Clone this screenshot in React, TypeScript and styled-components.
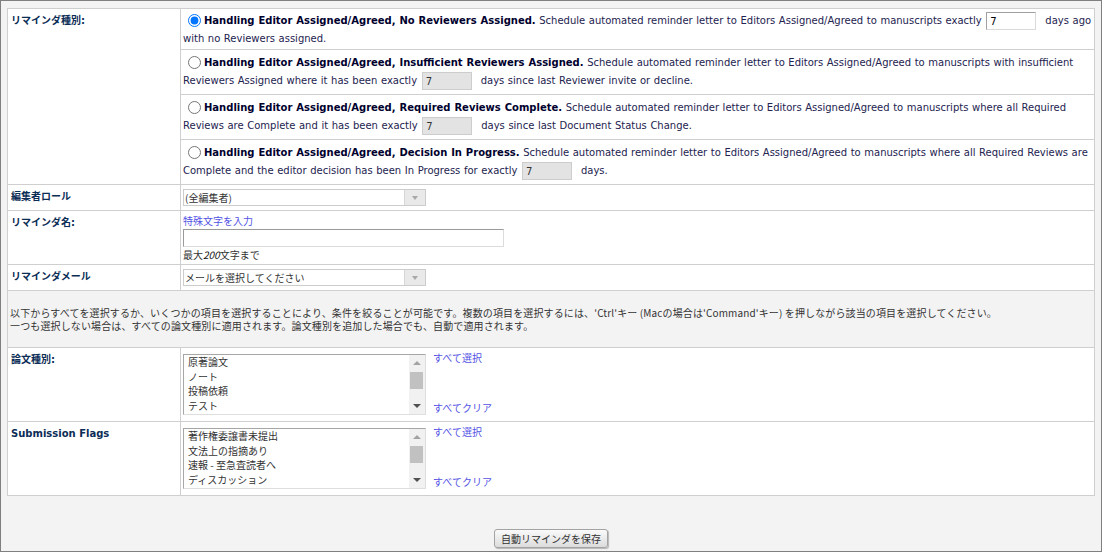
import React from "react";
import styled, { createGlobalStyle } from "styled-components";

const FONT = `"DejaVu Sans", "Noto Sans CJK JP", sans-serif`;
const JP = `"Noto Sans CJK JP", "DejaVu Sans", sans-serif`;
const LINE = "#cfcfcf";

const GlobalStyle = createGlobalStyle`
  html, body { margin: 0; padding: 0; background: #f3f3f3; }
  body { font-family: ${FONT}; font-size: 10px; }
  *, *::before, *::after { box-sizing: border-box; }
`;

const Page = styled.div`
  width: 1102px;
  height: 552px;
  border: 1px solid #7f7f7f;
  background: #f3f3f3;
  padding: 7px 6px 0 6px;
  display: flex;
  flex-direction: column;
`;

const Form = styled.div`
  display: grid;
  grid-template-columns: 173px 1fr;
  background: #fff;
  border: 1px solid ${LINE};
  border-bottom: none;
`;

const LabelCell = styled.div`
  border-right: 1px solid ${LINE};
  border-bottom: 1px solid ${LINE};
  padding: 5px 3px;
  font-weight: bold;
  line-height: 14px;
  color: #0b2d56;
`;

const ValueCell = styled.div<{ $pad?: string }>`
  border-bottom: 1px solid ${LINE};
  padding: ${(p) => p.$pad ?? "4px 2px"};
  min-width: 0;
`;

const OptionList = styled.div`
  display: flex;
  flex-direction: column;
`;

const Option = styled.div<{ $first?: boolean }>`
  padding: ${(p) => (p.$first ? "3px 2px 1px" : "4px 2px")};
  line-height: 18px;
  white-space: nowrap;
  word-spacing: 0.4px;
  color: #23234f;
  & + & {
    border-top: 1px solid ${LINE};
  }
`;

const Radio = styled.input`
  width: 13px;
  height: 13px;
  margin: 2px 3px 0 5px;
  vertical-align: top;
`;

const Title = styled.b`
  font-weight: bold;
  color: #00002e;
`;

const DayInput = styled.input`
  width: 50px;
  height: 18px;
  vertical-align: top;
  margin: 0 9px 0 1px;
  padding: 0 3px;
  font: 10px ${FONT};
  color: #000;
  border: 1px solid;
  border-color: #a0a0a0 #dadada #dadada #a0a0a0;
  background: #fff;
  &:disabled {
    background: #e3e3e3;
    border-color: #cdcdcd;
    color: #333;
  }
`;

const Select = styled.div`
  display: flex;
  width: 243px;
  height: 17px;
  border: 1px solid #cccccc;
  background: #fff;
  color: #333;
  font-family: ${JP};
`;

const SelectValue = styled.span`
  flex: 1;
  padding-left: 1px;
  line-height: 15px;
`;

const SelectArrow = styled.span`
  width: 21px;
  background: #e9e9e9;
  border-left: 1px solid #d6d6d6;
  display: flex;
  align-items: center;
  justify-content: center;
  &::after {
    content: "";
    border-left: 3px solid transparent;
    border-right: 3px solid transparent;
    border-top: 4px solid #a8a8a8;
  }
`;

const Link = styled.a`
  color: #5353e4;
  text-decoration: none;
  font-family: ${JP};
  cursor: pointer;
`;

const LinkLine = styled.div`
  line-height: 13px;
`;

const TextField = styled.input`
  display: block;
  width: 321px;
  height: 18px;
  margin: 1px 0;
  border: 1px solid;
  border-color: #9a9a9a #dcdcdc #dcdcdc #9a9a9a;
  background: #fff;
  font: 10px ${FONT};
`;

const Hint = styled.div`
  line-height: 14px;
  color: #333;
  font-family: ${JP};
  em {
    font-style: italic;
    color: #111;
  }
`;

const Note = styled.div`
  grid-column: 1 / -1;
  background: #f3f3f3;
  padding: 15px 2px;
  line-height: 13px;
  letter-spacing: 0.13px;
  font-family: ${JP};
  color: #333;
  border-bottom: 1px solid ${LINE};
`;

const ListRow = styled.div`
  display: flex;
  align-items: stretch;
`;

const ListBox = styled.div`
  margin-top: 3px;
  width: 243px;
  height: 61px;
  border: 1px solid;
  border-color: #a6a6a6 #dedede #dedede #a6a6a6;
  display: flex;
  background: #fff;
`;

const Items = styled.ul`
  flex: 1;
  margin: 0;
  padding: 0 0 0 4px;
  list-style: none;
  overflow: hidden;
  font-family: ${JP};
  line-height: 14.5px;
  color: #333;
`;

const Scrollbar = styled.div`
  width: 16px;
  background: #f1f1f1;
  display: flex;
  flex-direction: column;
`;

const ScrollBtn = styled.div<{ $dir: "up" | "down"; $color: string }>`
  height: 16px;
  display: flex;
  align-items: center;
  justify-content: center;
  &::after {
    content: "";
    border-left: 4px solid transparent;
    border-right: 4px solid transparent;
    ${(p) =>
      p.$dir === "up"
        ? `border-bottom: 4px solid ${p.$color};`
        : `border-top: 4px solid ${p.$color};`}
  }
`;

const Track = styled.div`
  flex: 1;
  padding: 1px 2px 0 1px;
`;

const Thumb = styled.div`
  height: 17px;
  background: #c1c1c1;
`;

const LinkCol = styled.div`
  margin-left: 7px;
  display: flex;
  flex-direction: column;
  justify-content: space-between;
  line-height: 14px;
`;

const Footer = styled.div`
  flex: 1;
  display: flex;
  justify-content: center;
  align-items: flex-start;
  padding-top: 33px;
`;

const SaveButton = styled.button`
  height: 19px;
  padding: 0 6px;
  font: 10px ${JP};
  color: #333;
  border: 1px solid #a3a3a3;
  border-radius: 3px;
  background: linear-gradient(#fafafa, #dcdcdc);
  box-shadow: 1px 1px 1px rgba(0, 0, 0, 0.25);
  line-height: 16px;
`;

const MultiList: React.FC<{ items: string[] }> = ({ items }) => (
  <ListRow>
    <ListBox>
      <Items>
        {items.map((it) => (
          <li key={it}>{it}</li>
        ))}
      </Items>
      <Scrollbar>
        <ScrollBtn $dir="up" $color="#a3a3a3" />
        <Track>
          <Thumb />
        </Track>
        <ScrollBtn $dir="down" $color="#505050" />
      </Scrollbar>
    </ListBox>
    <LinkCol>
      <Link>すべて選択</Link>
      <Link>すべてクリア</Link>
    </LinkCol>
  </ListRow>
);

const Dropdown: React.FC<{ value: string }> = ({ value }) => (
  <Select>
    <SelectValue>{value}</SelectValue>
    <SelectArrow />
  </Select>
);

export default function App() {
  return (
    <>
      <GlobalStyle />
      <Page>
        <Form>
          <LabelCell>リマインダ種別:</LabelCell>
          <ValueCell $pad="0">
            <OptionList>
              <Option $first>
                <Radio type="radio" name="type" defaultChecked />
                <Title>Handling Editor Assigned/Agreed, No Reviewers Assigned.</Title> Schedule
                automated reminder letter to Editors Assigned/Agreed to manuscripts exactly{" "}
                <DayInput defaultValue="7" />
                days ago
                <br />
                with no Reviewers assigned.
              </Option>
              <Option>
                <Radio type="radio" name="type" />
                <Title>Handling Editor Assigned/Agreed, Insufficient Reviewers Assigned.</Title>{" "}
                Schedule automated reminder letter to Editors Assigned/Agreed to manuscripts with
                insufficient
                <br />
                Reviewers Assigned where it has been exactly <DayInput defaultValue="7" disabled />
                days since last Reviewer invite or decline.
              </Option>
              <Option>
                <Radio type="radio" name="type" />
                <Title>Handling Editor Assigned/Agreed, Required Reviews Complete.</Title> Schedule
                automated reminder letter to Editors Assigned/Agreed to manuscripts where all
                Required
                <br />
                Reviews are Complete and it has been exactly <DayInput defaultValue="7" disabled />
                days since last Document Status Change.
              </Option>
              <Option>
                <Radio type="radio" name="type" />
                <Title>Handling Editor Assigned/Agreed, Decision In Progress.</Title> Schedule
                automated reminder letter to Editors Assigned/Agreed to manuscripts where all
                Required Reviews are
                <br />
                Complete and the editor decision has been In Progress for exactly{" "}
                <DayInput defaultValue="7" disabled />
                days.
              </Option>
            </OptionList>
          </ValueCell>

          <LabelCell>編集者ロール</LabelCell>
          <ValueCell $pad="4px 2px">
            <Dropdown value="(全編集者)" />
          </ValueCell>

          <LabelCell>リマインダ名:</LabelCell>
          <ValueCell $pad="3px 2px 2px">
            <LinkLine>
              <Link>特殊文字を入力</Link>
            </LinkLine>
            <TextField />
            <Hint>
              最大<em>200</em>文字まで
            </Hint>
          </ValueCell>

          <LabelCell>リマインダメール</LabelCell>
          <ValueCell $pad="4px 2px">
            <Dropdown value="メールを選択してください" />
          </ValueCell>

          <Note>
            以下からすべてを選択するか、いくつかの項目を選択することにより、条件を絞ることが可能です。複数の項目を選択するには、'Ctrl'キー
            (Macの場合は'Command'キー) を押しながら該当の項目を選択してください。
            <br />
            一つも選択しない場合は、すべての論文種別に適用されます。論文種別を追加した場合でも、自動で適用されます。
          </Note>

          <LabelCell>論文種別:</LabelCell>
          <ValueCell $pad="3px 2px 6px">
            <MultiList items={["原著論文", "ノート", "投稿依頼", "テスト"]} />
          </ValueCell>

          <LabelCell>Submission Flags</LabelCell>
          <ValueCell $pad="3px 2px 6px">
            <MultiList
              items={["著作権委譲書未提出", "文法上の指摘あり", "速報 - 至急査読者へ", "ディスカッション"]}
            />
          </ValueCell>
        </Form>
        <Footer>
          <SaveButton>自動リマインダを保存</SaveButton>
        </Footer>
      </Page>
    </>
  );
}
